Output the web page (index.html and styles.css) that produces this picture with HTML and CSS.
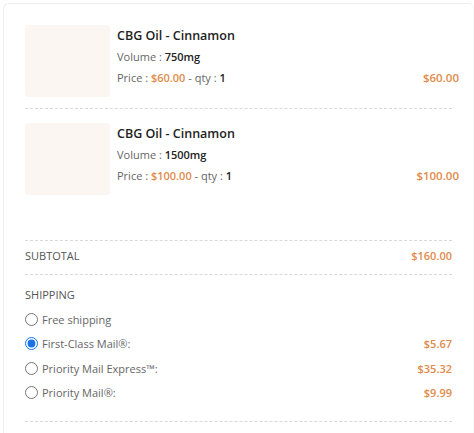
FILE: index.html
```html
<!DOCTYPE html>
<html>
<head>
<meta charset="utf-8">
<link rel="stylesheet" href="styles.css">
</head>
<body>
<div class="card">
  <div class="items">
    <div class="item">
      <div class="thumb"></div>
      <div class="info">
        <div class="title">CBG Oil - Cinnamon</div>
        <div class="meta">Volume : <b>750mg</b></div>
        <div class="price-row">
          <span class="meta">Price : <span class="orange">$60.00</span> - qty : <b>1</b></span>
          <span class="orange total">$60.00</span>
        </div>
      </div>
    </div>
    <div class="item last">
      <div class="thumb"></div>
      <div class="info">
        <div class="title">CBG Oil - Cinnamon</div>
        <div class="meta">Volume : <b>1500mg</b></div>
        <div class="price-row">
          <span class="meta">Price : <span class="orange">$100.00</span> - qty : <b>1</b></span>
          <span class="orange total">$100.00</span>
        </div>
      </div>
    </div>
  </div>
  <div class="subtotal">
    <span class="label">SUBTOTAL</span>
    <span class="orange amount">$160.00</span>
  </div>
  <div class="shipping">
    <div class="label ship-title">SHIPPING</div>
    <label class="opt"><span class="opt-left"><input type="radio" name="ship"><span>Free shipping</span></span></label>
    <label class="opt"><span class="opt-left"><input type="radio" name="ship" checked><span>First-Class Mail®:</span></span><span class="orange amount">$5.67</span></label>
    <label class="opt"><span class="opt-left"><input type="radio" name="ship"><span>Priority Mail Express™:</span></span><span class="orange amount">$35.32</span></label>
    <label class="opt"><span class="opt-left"><input type="radio" name="ship"><span>Priority Mail®:</span></span><span class="orange amount">$9.99</span></label>
  </div>
</div>
</body>
</html>
```
FILE: styles.css
```css
* { box-sizing: border-box; }
body {
  margin: 0;
  background: #fff;
  font-family: "Open Sans", "DejaVu Sans", sans-serif;
  color: #333;
}
.card {
  margin: 3px 0 0 3px;
  width: 471px;
  height: 440px;
  border: 1px solid #eeeeee;
  border-right-color: #f6f6f6;
  border-radius: 6px;
  padding: 0 21px 0 21px;
}
.items {
  padding-top: 21px;
  border-bottom: 1px dashed #d9d9d9;
  padding-bottom: 45px;
}
.item {
  display: flex;
  gap: 7px;
  padding-bottom: 11px;
  border-bottom: 1px dashed #d9d9d9;
}
.item.last {
  border-bottom: none;
  padding-top: 14px;
  padding-bottom: 0;
}
.thumb {
  width: 85px;
  height: 72px;
  flex: none;
  background: #fbf6f1;
  border-radius: 3px;
}
.info {
  flex: 1;
  padding-top: 1px;
}
.title {
  font-size: 12.5px;
  font-weight: 600;
  color: #222;
  line-height: 20px;
}
.meta {
  font-size: 11px;
  color: #666;
  line-height: 21px;
}
.meta b {
  font-weight: 600;
  color: #222;
}
.orange {
  color: #df8b4b;
  font-weight: 600;
}
.price-row {
  display: flex;
  justify-content: space-between;
  align-items: baseline;
  margin-right: -7px;
}
.total { font-size: 11.5px; }
.subtotal {
  display: flex;
  justify-content: space-between;
  align-items: center;
  padding: 6px 0 9px;
  line-height: 18px;
  border-bottom: 1px dashed #d9d9d9;
}
.label {
  font-size: 11px;
  font-weight: 500;
  color: #555;
}
.amount { font-size: 11px; }
.shipping {
  padding-top: 11px;
  padding-bottom: 16px;
  border-bottom: 1px dashed #d9d9d9;
}
.ship-title {
  line-height: 18px;
  margin-bottom: 3px;
}
.opt {
  display: flex;
  justify-content: space-between;
  align-items: center;
  height: 24.5px;
  font-size: 11px;
  color: #666;
}
.opt-left {
  display: flex;
  align-items: center;
  gap: 4px;
}
.opt input {
  margin: 0;
  width: 13px;
  height: 13px;
  accent-color: #1a73e8;
}
```
